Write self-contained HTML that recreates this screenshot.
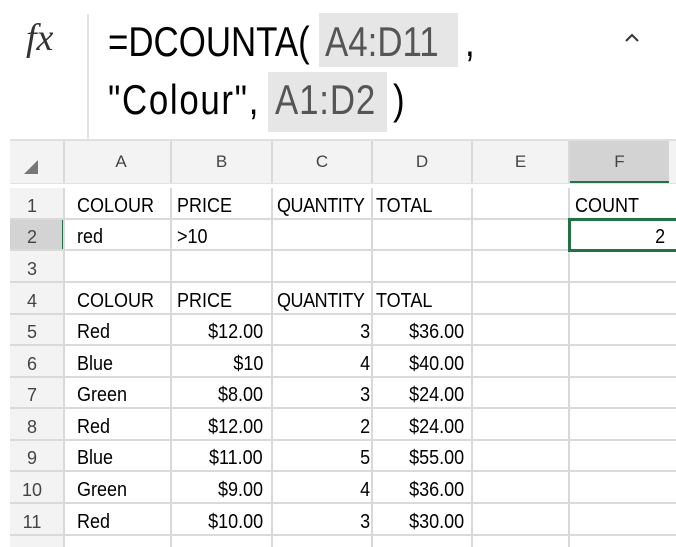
<!DOCTYPE html><html><head><style>
body{margin:0;width:676px;height:547px;background:#fff;position:relative;overflow:hidden;font-family:"Liberation Sans",sans-serif}
.a{position:absolute}
.f{position:absolute;font-size:42px;line-height:42px;white-space:nowrap;transform:scaleX(0.83);transform-origin:left}
.t{position:absolute;font-size:20px;color:#000;white-space:nowrap;line-height:32px;transform:scaleX(0.9);transform-origin:left}
.r{transform-origin:right}
.h{position:absolute;font-size:17px;color:#444;text-align:center;line-height:43px;top:140px}
.n{position:absolute;font-size:18px;color:#444;width:44px;text-align:center;left:10px;line-height:32px}
</style></head><body>
<div class="a" style="left:26px;top:16px;font-family:'Liberation Serif',serif;font-style:italic;font-size:38px;color:#333">fx</div>
<div class="a" style="left:87px;top:14px;width:2px;height:125px;background:#e4e4e4"></div>
<div class="a" style="left:319px;top:13px;width:139px;height:54px;background:#e6e6e6"></div>
<div class="a" style="left:268px;top:72px;width:119px;height:60px;background:#e6e6e6"></div>
<div class="f" style="left:108px;top:21px">=DCOUNTA(</div>
<div class="f" style="left:325px;top:21px;color:#555">A4:D11</div>
<div class="f" style="left:465px;top:21px">,</div>
<div class="f" style="left:108px;top:79px;letter-spacing:2px">"Colour",</div>
<div class="f" style="left:275px;top:79px;color:#555;letter-spacing:1px">A1:D2</div>
<div class="f" style="left:393px;top:79px">)</div>
<svg class="a" style="left:624px;top:32px" width="16" height="12"><path d="M2 9 L8 3 L14 9" fill="none" stroke="#333" stroke-width="2"/></svg>
<div class="a" style="left:10px;top:139px;width:666px;height:2px;background:#e0e0e0"></div>
<div class="a" style="left:10px;top:141px;width:666px;height:42px;background:#f3f3f3"></div>
<div class="a" style="left:569px;top:141px;width:100px;height:42px;background:#d3d3d3"></div>
<div class="a" style="left:569px;top:181px;width:100px;height:3px;background:#217346"></div>
<div class="a" style="left:10px;top:183px;width:54px;height:364px;background:#f3f3f3"></div>
<div class="a" style="left:10px;top:219px;width:52px;height:31px;background:#d3d3d3"></div>
<div class="a" style="left:62px;top:219px;width:3px;height:31px;background:#217346"></div>
<div class="a" style="left:24px;top:160px;width:0;height:0;border-left:14px solid transparent;border-bottom:14px solid #777"></div>
<svg class="a" style="left:0;top:0" width="676" height="547">
<g fill="#d9d9d9">
<rect x="63" y="141" width="2" height="406"/>
<rect x="170" y="141" width="2" height="406"/><rect x="271" y="141" width="2" height="406"/>
<rect x="371" y="141" width="2" height="406"/><rect x="471" y="141" width="2" height="406"/>
<rect x="568" y="141" width="2" height="406"/>
<rect x="10" y="183" width="666" height="2" fill="#e2e2e2"/>
</g>
<rect x="65" y="184" width="8" height="363" fill="#fff"/>
<rect x="10" y="184" width="666" height="4" fill="#fff"/>
<g fill="#dadada">
<rect x="10" y="218" width="666" height="2"/><rect x="10" y="249" width="666" height="2"/>
<rect x="10" y="281" width="666" height="2"/><rect x="10" y="313" width="666" height="2"/>
<rect x="10" y="344" width="666" height="2"/><rect x="10" y="376" width="666" height="2"/>
<rect x="10" y="407" width="666" height="2"/><rect x="10" y="439" width="666" height="2"/>
<rect x="10" y="470" width="666" height="2"/><rect x="10" y="502" width="666" height="2"/>
<rect x="10" y="534" width="666" height="2"/>
</g>
<rect x="569.5" y="219.5" width="110" height="31" fill="none" stroke="#217346" stroke-width="3"/>
</svg>
<div class="h" style="left:72px;width:98px">A</div><div class="h" style="left:172px;width:99px">B</div>
<div class="h" style="left:273px;width:98px">C</div><div class="h" style="left:373px;width:98px">D</div>
<div class="h" style="left:473px;width:95px">E</div><div class="h" style="left:570px;width:99px">F</div>
<div class="n" style="top:190px">1</div><div class="n" style="top:221px">2</div><div class="n" style="top:253px">3</div>
<div class="n" style="top:285px">4</div><div class="n" style="top:316px">5</div><div class="n" style="top:348px">6</div>
<div class="n" style="top:379px">7</div><div class="n" style="top:411px">8</div><div class="n" style="top:442px">9</div>
<div class="n" style="top:474px">10</div><div class="n" style="top:506px">11</div>
<div class="t" style="left:77px;top:190px">COLOUR</div><div class="t" style="left:177px;top:190px">PRICE</div>
<div class="t" style="left:277px;top:190px;letter-spacing:-0.5px">QUANTITY</div><div class="t" style="left:376px;top:190px">TOTAL</div>
<div class="t" style="left:575px;top:190px">COUNT</div>
<div class="t" style="left:77px;top:221px">red</div><div class="t" style="left:177px;top:221px">&gt;10</div>
<div class="t r" style="right:11px;top:221px">2</div>
<div class="t" style="left:77px;top:285px">COLOUR</div><div class="t" style="left:177px;top:285px">PRICE</div>
<div class="t" style="left:277px;top:285px;letter-spacing:-0.5px">QUANTITY</div><div class="t" style="left:376px;top:285px">TOTAL</div>
<div class="t" style="left:77px;top:316px">Red</div><div class="t r" style="right:413px;top:316px">$12.00</div><div class="t r" style="right:306px;top:316px">3</div><div class="t r" style="right:212px;top:316px">$36.00</div>
<div class="t" style="left:77px;top:348px">Blue</div><div class="t r" style="right:413px;top:348px">$10</div><div class="t r" style="right:306px;top:348px">4</div><div class="t r" style="right:212px;top:348px">$40.00</div>
<div class="t" style="left:77px;top:379px">Green</div><div class="t r" style="right:413px;top:379px">$8.00</div><div class="t r" style="right:306px;top:379px">3</div><div class="t r" style="right:212px;top:379px">$24.00</div>
<div class="t" style="left:77px;top:411px">Red</div><div class="t r" style="right:413px;top:411px">$12.00</div><div class="t r" style="right:306px;top:411px">2</div><div class="t r" style="right:212px;top:411px">$24.00</div>
<div class="t" style="left:77px;top:442px">Blue</div><div class="t r" style="right:413px;top:442px">$11.00</div><div class="t r" style="right:306px;top:442px">5</div><div class="t r" style="right:212px;top:442px">$55.00</div>
<div class="t" style="left:77px;top:474px">Green</div><div class="t r" style="right:413px;top:474px">$9.00</div><div class="t r" style="right:306px;top:474px">4</div><div class="t r" style="right:212px;top:474px">$36.00</div>
<div class="t" style="left:77px;top:506px">Red</div><div class="t r" style="right:413px;top:506px">$10.00</div><div class="t r" style="right:306px;top:506px">3</div><div class="t r" style="right:212px;top:506px">$30.00</div>
</body></html>
